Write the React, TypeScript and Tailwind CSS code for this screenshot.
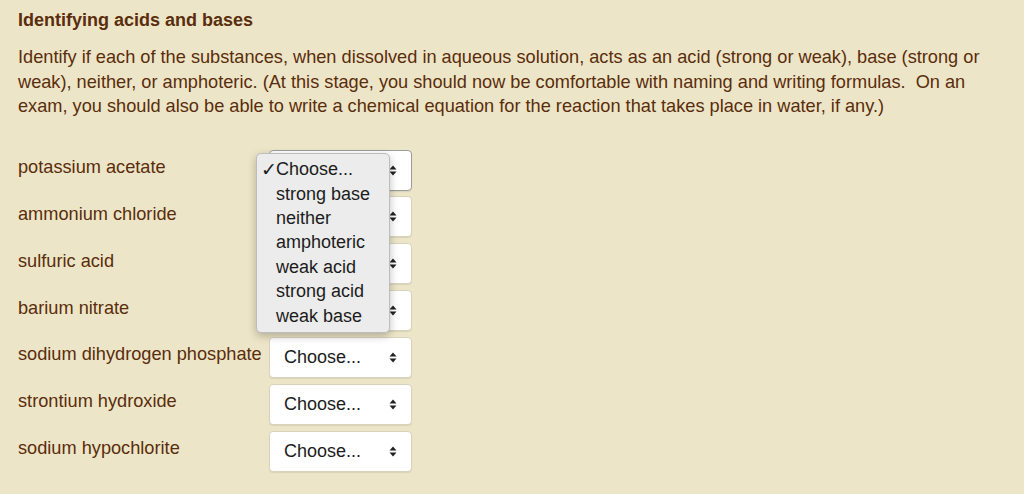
import React from 'react';

const substances = [
  'potassium acetate',
  'ammonium chloride',
  'sulfuric acid',
  'barium nitrate',
  'sodium dihydrogen phosphate',
  'strontium hydroxide',
  'sodium hypochlorite',
];

const options = ['strong base', 'neither', 'amphoteric', 'weak acid', 'strong acid', 'weak base'];

const Arrows = () => (
  <svg width="8" height="11" viewBox="0 0 8 11" className="shrink-0">
    <path d="M4 0.5 L7.5 4.5 H0.5 Z" fill="#222" />
    <path d="M4 10.5 L7.5 6.5 H0.5 Z" fill="#222" />
  </svg>
);

const FakeSelect = ({ focused }: { focused?: boolean }) => (
  <div
    className={`h-[41px] w-[143px] bg-white rounded-[4px] border flex items-center justify-between pl-[14px] pr-[14px] shadow-[0_1px_1px_rgba(0,0,0,0.08)] ${
      focused ? 'border-[#9c9c9c]' : 'border-[#d9d2bd]'
    }`}
  >
    <span className="text-[18px] text-[#1c1c1c]">Choose...</span>
    <Arrows />
  </div>
);

const Menu = () => (
  <div className="absolute left-[-13px] top-[3px] w-[134px] bg-[#ececec] border border-[#bdbdbd] rounded-[5px] shadow-[0_3px_8px_rgba(0,0,0,0.25)] py-[4px] z-10">
    <div className="flex items-center h-[24.4px] pl-[4px] text-[18px] text-[#1c1c1c]">
      <span className="w-[15px] text-[19px] leading-none">✓</span>
      <span>Choose...</span>
    </div>
    {options.map((o) => (
      <div key={o} className="flex items-center h-[24.4px] pl-[19px] text-[18px] text-[#1c1c1c]">
        {o}
      </div>
    ))}
  </div>
);

export default function App() {
  return (
    <div
      className="w-[1024px] h-[494px] bg-[#ede5c7] text-[#5a2d0c] px-[18px] pt-[9px] overflow-hidden"
      style={{ fontFamily: '"Liberation Sans", Arial, sans-serif' }}
    >
      <h3 className="text-[18px] font-bold leading-[22px]">Identifying acids and bases</h3>
      <p className="mt-[14px] text-[18.2px] leading-[24.5px] whitespace-nowrap">
        Identify if each of the substances, when dissolved in aqueous solution, acts as an acid (strong or weak), base (strong or
        <br />
        weak), neither, or amphoteric. (At this stage, you should now be comfortable with naming and writing formulas.&nbsp; On an
        <br />
        exam, you should also be able to write a chemical equation for the reaction that takes place in water, if any.)
      </p>
      <div className="mt-[31px] flex flex-col gap-[5.9px]">
        {substances.map((s, i) => (
          <div key={s} className="flex items-center">
            <div className="w-[251px] text-[18.2px] -mt-[5px]">{s}</div>
            <div className="relative">
              <FakeSelect focused={i === 0} />
              {i === 0 && <Menu />}
            </div>
          </div>
        ))}
      </div>
    </div>
  );
}
